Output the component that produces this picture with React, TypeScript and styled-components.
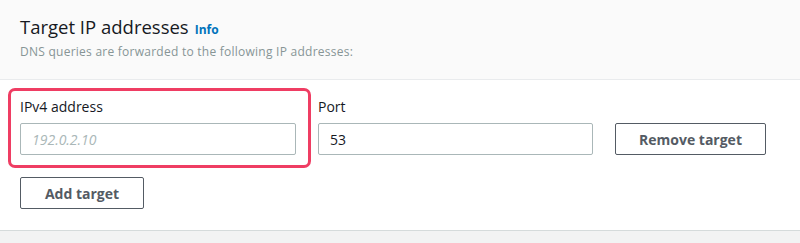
import React from "react";
import styled, { createGlobalStyle } from "styled-components";

const Global = createGlobalStyle`
  html, body { margin: 0; padding: 0; background: #ffffff; }
  body { font-family: "Open Sans", "Noto Sans", Arial, sans-serif; }
  * { box-sizing: border-box; }
`;

const Page = styled.div`
  width: 800px;
  height: 243px;
  display: flex;
  flex-direction: column;
  background: #ffffff;
  overflow: hidden;
`;

const Header = styled.header`
  height: 80px;
  padding: 14px 20px 0 20px;
  background: #fafafa;
  border-bottom: 1px solid #e9ebed;
`;

const TitleRow = styled.div`
  display: flex;
  align-items: baseline;
  gap: 6px;
`;

const Title = styled.h2`
  margin: 0;
  font-size: 18.5px;
  line-height: 26px;
  font-weight: 400;
  color: #16191f;
`;

const InfoLink = styled.a`
  font-size: 12px;
  font-weight: 700;
  color: #0073bb;
  text-decoration: none;
`;

const Subtitle = styled.p`
  margin: 3px 0 0 0;
  font-size: 12px;
  line-height: 17px;
  letter-spacing: 0.25px;
  color: #879596;
  font-weight: 500;
`;

const Body = styled.section`
  flex: 1;
  padding: 18px 20px 0 20px;
  background: #ffffff;
  display: flex;
  flex-direction: column;
  gap: 22px;
  border-bottom: 1px solid #d5dbdb;
`;

const Row = styled.div`
  display: flex;
  align-items: flex-end;
  gap: 22px;
`;

const Field = styled.div<{ $width: number }>`
  position: relative;
  width: ${(p) => p.$width}px;
  display: flex;
  flex-direction: column;
  gap: 7px;
`;

const Highlight = styled.div`
  position: absolute;
  left: -12px;
  right: -15px;
  top: -10px;
  bottom: -13px;
  border: 3px solid #ef3d63;
  border-radius: 7px;
  pointer-events: none;
`;

const Label = styled.label`
  font-size: 14px;
  line-height: 18px;
  color: #16191f;
`;

const Input = styled.input`
  height: 32px;
  width: 100%;
  border: 1px solid #aab7b8;
  border-radius: 2px;
  padding: 0 11px;
  font-family: inherit;
  font-size: 14px;
  color: #16191f;
  background: #ffffff;
  outline: none;
  &::placeholder {
    color: #aab7b8;
    font-style: italic;
  }
`;

const Button = styled.button<{ $width: number }>`
  width: ${(p) => p.$width}px;
  height: 32px;
  border: 1px solid #545b64;
  border-radius: 2px;
  background: #ffffff;
  color: #545b64;
  font-family: inherit;
  font-size: 14px;
  font-weight: 700;
  cursor: pointer;
  padding: 0;
`;

const Footer = styled.div`
  height: 12px;
  background: #f2f3f3;
`;

export default function App() {
  return (
    <>
      <Global />
      <Page>
        <Header>
          <TitleRow>
            <Title>Target IP addresses</Title>
            <InfoLink href="#">Info</InfoLink>
          </TitleRow>
          <Subtitle>DNS queries are forwarded to the following IP addresses:</Subtitle>
        </Header>
        <Body>
          <Row>
            <Field $width={276}>
              <Highlight />
              <Label>IPv4 address</Label>
              <Input placeholder="192.0.2.10" />
            </Field>
            <Field $width={275}>
              <Label>Port</Label>
              <Input defaultValue="53" />
            </Field>
            <Button $width={151}>Remove target</Button>
          </Row>
          <div>
            <Button $width={124}>Add target</Button>
          </div>
        </Body>
        <Footer />
      </Page>
    </>
  );
}
